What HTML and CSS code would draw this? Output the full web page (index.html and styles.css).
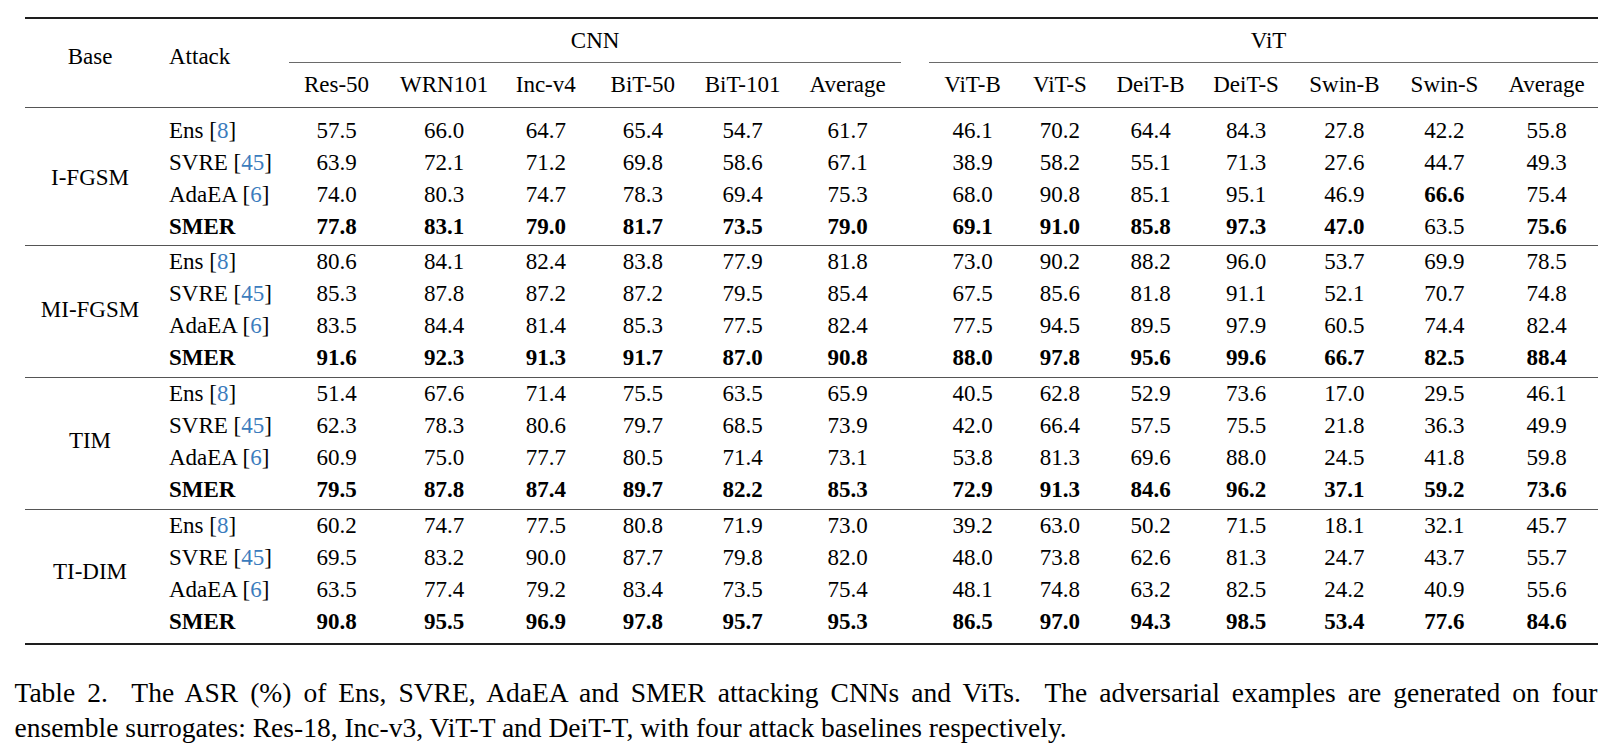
FILE: index.html
```html
<!DOCTYPE html>
<html>
<head>
<meta charset="utf-8">
<link rel="stylesheet" href="styles.css">
</head>
<body>
<div class="page">
<table class="asr">
<colgroup>
<col class="c-base"><col class="c-attack">
<col class="c1"><col class="c2"><col class="c3"><col class="c4"><col class="c5"><col class="c6">
<col class="c-gap">
<col class="v1"><col class="v2"><col class="v3"><col class="v4"><col class="v5"><col class="v6"><col class="v7">
</colgroup>
<thead>
<tr class="h1">
<th rowspan="2" class="hb">Base</th>
<th rowspan="2" class="hb ha">Attack</th>
<th colspan="6" class="grp"><div class="cmid cnn">CNN</div></th>
<th class="gap"></th>
<th colspan="7" class="grp"><div class="cmid vit"><span class="vit-label">ViT</span></div></th>
</tr>
<tr class="h2">
<th>Res-50</th><th>WRN101</th><th>Inc-v4</th><th>BiT-50</th><th>BiT-101</th><th>Average</th>
<th class="gap"></th>
<th>ViT-B</th><th>ViT-S</th><th>DeiT-B</th><th>DeiT-S</th><th>Swin-B</th><th>Swin-S</th><th>Average</th>
</tr>
</thead>
<tbody class="g g1">
<tr class="first"><td rowspan="4" class="base b1">I-FGSM</td><td class="atk">Ens [<span class="cite">8</span>]</td><td>57.5</td><td>66.0</td><td>64.7</td><td>65.4</td><td>54.7</td><td>61.7</td><td class="gap"></td><td>46.1</td><td>70.2</td><td>64.4</td><td>84.3</td><td>27.8</td><td>42.2</td><td>55.8</td></tr>
<tr><td class="atk">SVRE [<span class="cite">45</span>]</td><td>63.9</td><td>72.1</td><td>71.2</td><td>69.8</td><td>58.6</td><td>67.1</td><td class="gap"></td><td>38.9</td><td>58.2</td><td>55.1</td><td>71.3</td><td>27.6</td><td>44.7</td><td>49.3</td></tr>
<tr><td class="atk">AdaEA [<span class="cite">6</span>]</td><td>74.0</td><td>80.3</td><td>74.7</td><td>78.3</td><td>69.4</td><td>75.3</td><td class="gap"></td><td>68.0</td><td>90.8</td><td>85.1</td><td>95.1</td><td>46.9</td><td class="bold">66.6</td><td>75.4</td></tr>
<tr class="last best"><td class="atk">SMER</td><td>77.8</td><td>83.1</td><td>79.0</td><td>81.7</td><td>73.5</td><td>79.0</td><td class="gap"></td><td>69.1</td><td>91.0</td><td>85.8</td><td>97.3</td><td>47.0</td><td class="reg">63.5</td><td>75.6</td></tr>
</tbody>
<tbody class="g g2">
<tr class="first"><td rowspan="4" class="base b2">MI-FGSM</td><td class="atk">Ens [<span class="cite">8</span>]</td><td>80.6</td><td>84.1</td><td>82.4</td><td>83.8</td><td>77.9</td><td>81.8</td><td class="gap"></td><td>73.0</td><td>90.2</td><td>88.2</td><td>96.0</td><td>53.7</td><td>69.9</td><td>78.5</td></tr>
<tr><td class="atk">SVRE [<span class="cite">45</span>]</td><td>85.3</td><td>87.8</td><td>87.2</td><td>87.2</td><td>79.5</td><td>85.4</td><td class="gap"></td><td>67.5</td><td>85.6</td><td>81.8</td><td>91.1</td><td>52.1</td><td>70.7</td><td>74.8</td></tr>
<tr><td class="atk">AdaEA [<span class="cite">6</span>]</td><td>83.5</td><td>84.4</td><td>81.4</td><td>85.3</td><td>77.5</td><td>82.4</td><td class="gap"></td><td>77.5</td><td>94.5</td><td>89.5</td><td>97.9</td><td>60.5</td><td>74.4</td><td>82.4</td></tr>
<tr class="last best"><td class="atk">SMER</td><td>91.6</td><td>92.3</td><td>91.3</td><td>91.7</td><td>87.0</td><td>90.8</td><td class="gap"></td><td>88.0</td><td>97.8</td><td>95.6</td><td>99.6</td><td>66.7</td><td>82.5</td><td>88.4</td></tr>
</tbody>
<tbody class="g g3">
<tr class="first"><td rowspan="4" class="base b3">TIM</td><td class="atk">Ens [<span class="cite">8</span>]</td><td>51.4</td><td>67.6</td><td>71.4</td><td>75.5</td><td>63.5</td><td>65.9</td><td class="gap"></td><td>40.5</td><td>62.8</td><td>52.9</td><td>73.6</td><td>17.0</td><td>29.5</td><td>46.1</td></tr>
<tr><td class="atk">SVRE [<span class="cite">45</span>]</td><td>62.3</td><td>78.3</td><td>80.6</td><td>79.7</td><td>68.5</td><td>73.9</td><td class="gap"></td><td>42.0</td><td>66.4</td><td>57.5</td><td>75.5</td><td>21.8</td><td>36.3</td><td>49.9</td></tr>
<tr><td class="atk">AdaEA [<span class="cite">6</span>]</td><td>60.9</td><td>75.0</td><td>77.7</td><td>80.5</td><td>71.4</td><td>73.1</td><td class="gap"></td><td>53.8</td><td>81.3</td><td>69.6</td><td>88.0</td><td>24.5</td><td>41.8</td><td>59.8</td></tr>
<tr class="last best"><td class="atk">SMER</td><td>79.5</td><td>87.8</td><td>87.4</td><td>89.7</td><td>82.2</td><td>85.3</td><td class="gap"></td><td>72.9</td><td>91.3</td><td>84.6</td><td>96.2</td><td>37.1</td><td>59.2</td><td>73.6</td></tr>
</tbody>
<tbody class="g g4">
<tr class="first"><td rowspan="4" class="base b4">TI-DIM</td><td class="atk">Ens [<span class="cite">8</span>]</td><td>60.2</td><td>74.7</td><td>77.5</td><td>80.8</td><td>71.9</td><td>73.0</td><td class="gap"></td><td>39.2</td><td>63.0</td><td>50.2</td><td>71.5</td><td>18.1</td><td>32.1</td><td>45.7</td></tr>
<tr><td class="atk">SVRE [<span class="cite">45</span>]</td><td>69.5</td><td>83.2</td><td>90.0</td><td>87.7</td><td>79.8</td><td>82.0</td><td class="gap"></td><td>48.0</td><td>73.8</td><td>62.6</td><td>81.3</td><td>24.7</td><td>43.7</td><td>55.7</td></tr>
<tr><td class="atk">AdaEA [<span class="cite">6</span>]</td><td>63.5</td><td>77.4</td><td>79.2</td><td>83.4</td><td>73.5</td><td>75.4</td><td class="gap"></td><td>48.1</td><td>74.8</td><td>63.2</td><td>82.5</td><td>24.2</td><td>40.9</td><td>55.6</td></tr>
<tr class="last best"><td class="atk">SMER</td><td>90.8</td><td>95.5</td><td>96.9</td><td>97.8</td><td>95.7</td><td>95.3</td><td class="gap"></td><td>86.5</td><td>97.0</td><td>94.3</td><td>98.5</td><td>53.4</td><td>77.6</td><td>84.6</td></tr>
</tbody>
</table>
<div class="caption">
<p class="cap-line cap-first">Table 2.&nbsp; The ASR (%) of Ens, SVRE, AdaEA and SMER attacking CNNs and ViTs.&nbsp; The adversarial examples are generated on four</p>
<p class="cap-line">ensemble surrogates: Res-18, Inc-v3, ViT-T and DeiT-T, with four attack baselines respectively.</p>
</div>
</div>
</body>
</html>
```
FILE: styles.css
```css
html, body {
  margin: 0;
  padding: 0;
  background: #ffffff;
}

body {
  font-family: "Liberation Serif", "Times New Roman", serif;
  color: #000;
}

.page {
  width: 1615px;
  height: 753px;
  overflow: hidden;
}

.asr {
  table-layout: fixed;
  width: 1573px;
  margin: 17px 0 0 25px;
  border-collapse: separate;
  border-spacing: 0;
  border-top: 2px solid #1e1e1e;
  border-bottom: 2px solid #1e1e1e;
  font-size: 23px;
  line-height: 32px;
}

.c-base { width: 130px; }
.c-attack { width: 126.75px; }
.c1 { width: 109.5px; }
.c2 { width: 105.75px; }
.c3 { width: 97.5px; }
.c4 { width: 96.5px; }
.c5 { width: 103.25px; }
.c6 { width: 106.75px; }
.c-gap { width: 28px; }
.v1 { width: 87px; }
.v2 { width: 87.85px; }
.v3 { width: 93.4px; }
.v4 { width: 97.65px; }
.v5 { width: 99.1px; }
.v6 { width: 101px; }
.v7 { width: 103px; }

.asr th,
.asr td {
  padding: 0;
  font-weight: normal;
  text-align: center;
  white-space: nowrap;
  vertical-align: top;
}

/* header */
.h1 th { padding-top: 6px; }
.h1 th.hb { padding-top: 21.5px; }
.h1 th.ha { text-align: left; padding-left: 14px; }
.h1 th.grp { padding-top: 6px; }
.cmid {
  padding-bottom: 5px;
  border-bottom: 1px solid #6a6a6a;
}
.cmid.cnn { margin-left: 7.5px; }
.vit-label { padding-left: 10px; }

.h2 th {
  padding-top: 6px;
  padding-bottom: 6px;
}

/* body groups */
.g tr.first td { border-top: 1px solid #555; }
.g1 tr.first td { padding-top: 7px; }
.g1 tr.last td { padding-bottom: 2px; }
.g2 tr.last td,
.g3 tr.last td { padding-bottom: 3px; }
.g4 tr.last td { padding-bottom: 5px; }

.asr td.atk {
  text-align: left;
  padding-left: 14px;
}

.asr td.base { text-align: center; }
.g1 tr.first td.b1 { padding-top: 54px; }
.g2 tr.first td.b2 { padding-top: 47.5px; }
.g3 tr.first td.b3 { padding-top: 46.5px; }
.g4 tr.first td.b4 { padding-top: 45.5px; }

.best td { font-weight: bold; }
.asr td.reg { font-weight: normal; }
.asr td.bold { font-weight: bold; }

.cite { color: #3b7cbd; }

/* caption */
.caption {
  margin: 30px 0 0 14.5px;
  width: 1583px;
  font-size: 27.5px;
  line-height: 35px;
}

.cap-line {
  margin: 0;
  text-align: left;
}

.cap-first {
  text-align: justify;
  text-align-last: justify;
}
```
